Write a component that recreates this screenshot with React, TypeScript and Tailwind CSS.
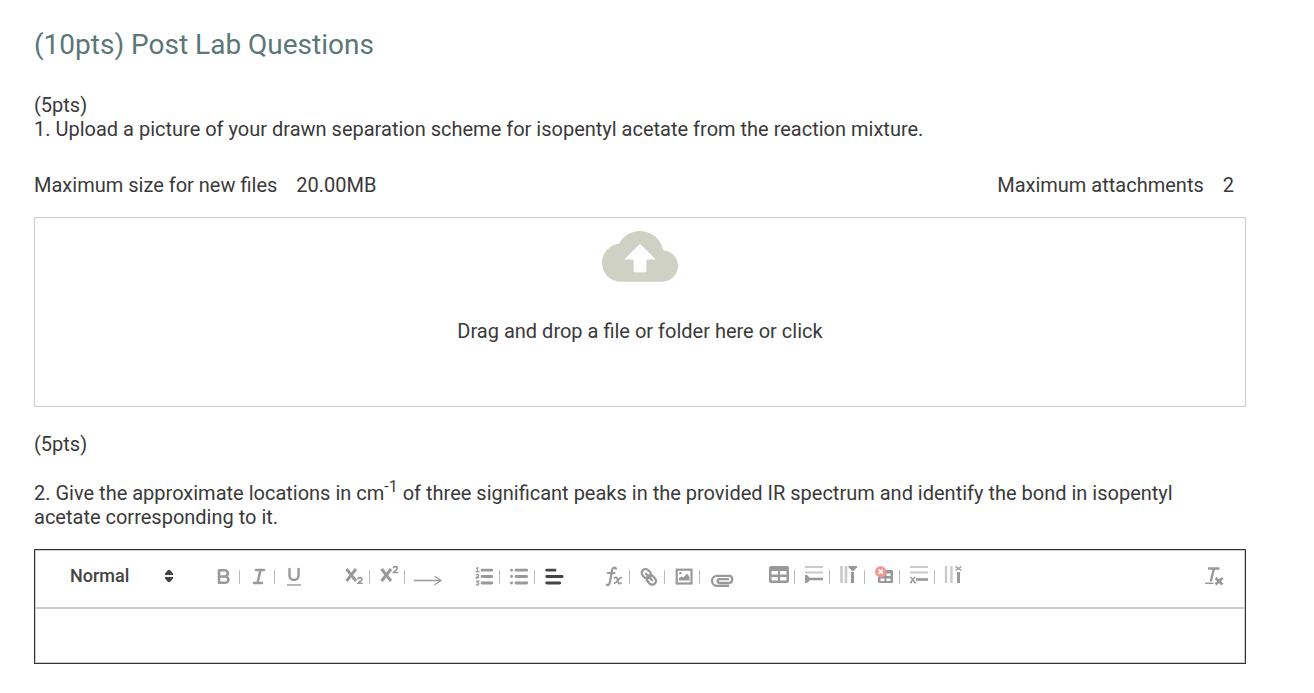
import { Fragment, type ReactNode } from "react";

type Tool = { label: string; icon: ReactNode };

const Glyph = ({ children }: { children: ReactNode }) => (
  <svg viewBox="0 0 35 40" className="h-10 w-[35px] shrink-0 overflow-visible" fill="none" stroke="#999" aria-hidden="true">
    {children}
  </svg>
);

const gridCells = (
  <path
    fill="#999"
    stroke="none"
    fillRule="evenodd"
    d="M11 8h16q2 0 2 2v13q0 2-2 2H11q-2 0-2-2V10q0-2 2-2zM11.500 13v3.500h6.500V13zM20 13v3.500h6.500V13zM11.500 19v3.500h6.500V19zM20 19v3.500h6.500V19z"
  />
);

const groups: Tool[][] = [
  [
    { label: "Bold", icon: <path strokeWidth="2.600" strokeLinejoin="round" d="M14 12.200h5.700a3 3 0 0 1 0 6.300h-5.700zM14 18.500h6.200a3.100 3.100 0 0 1 0 6.300h-6.200z" /> },
    { label: "Italic", icon: <path strokeWidth="2.500" strokeLinecap="round" d="M16 12h8M14 25h8M20.500 12l-3 13" /> },
    { label: "Underline", icon: <><path strokeWidth="2.400" strokeLinecap="round" d="M14.500 11v6.500a4.500 4.500 0 0 0 9 0V11" /><path strokeWidth="1.400" d="M12 27h14" /></> },
  ],
  [
    { label: "Subscript", icon: <><path strokeWidth="3" d="M11.500 11l9.500 12M21 11l-9.500 12" /><path strokeWidth="1.600" d="M23 21.300c0-2.200 4-2.200 4 0 0 1.200-2.500 2-4 4h4.800" /></> },
    { label: "Superscript", icon: <><path strokeWidth="3" d="M11.500 11l9.500 12M21 11l-9.500 12" /><path strokeWidth="1.600" d="M23.500 10.300c0-2.200 4-2.200 4 0 0 1.200-2.500 2-4 4.200h4.800" /></> },
    { label: "Reaction arrow", icon: <path strokeWidth="1.300" d="M9 22.500h27M29.500 18.200l6.500 4.300-6.500 4.300" /> },
  ],
  [
    {
      label: "Numbered list",
      icon: (
        <>
          <path strokeWidth="2.800" strokeLinecap="round" d="M17 12.200h9.800M17 18.500h9.800M17 25h9.800" />
          <path strokeWidth="1.200" d="M11 10.500l1.500-.8v4M10.500 13.700h4M11 17.200c.8-1.300 3-.9 2.700.3-.2.800-1.700 1.300-2.700 2.300h3.200M11 23.200h2.700l-1.300 1.500c2 0 1.900 2.400 0 2.400q-1 0-1.600-.6" />
        </>
      ),
    },
    { label: "Bulleted list", icon: <path strokeWidth="2.800" strokeLinecap="round" d="M11.500 12.200h.1M11.500 18.500h.1M11.500 25h.1M16 12.200h10.700M16 18.500h10.700M16 25h10.700" /> },
    { label: "Alignment", icon: <path stroke="#444" strokeWidth="2.800" strokeLinecap="round" d="M11.700 12.200h8.300M11.700 18.500h15.500M11.700 25h13" /> },
  ],
  [
    {
      label: "Formula",
      icon: (
        <>
          <path strokeWidth="2.200" strokeLinecap="round" d="M21 10.500c-1.500-1.800-3.500-.8-4 1.700l-2 11.500c-.4 2.800-1.800 4-3.200 3M12.800 15h6.700" />
          <path strokeWidth="1.800" strokeLinecap="round" d="M19.500 20c1.500-1.300 2.300-.7 2.800 1l.7 3c.6 1.800 1.600 2 3 .9M26.300 19.600c-2.400-.2-4.200 5.800-6.800 5.600" />
        </>
      ),
    },
    {
      label: "Link",
      icon: (
        <g transform="rotate(48 19 19)" strokeWidth="2.300">
          <rect x="9.800" y="15" width="10" height="7.600" rx="3.800" />
          <rect x="17.700" y="15.400" width="10" height="7.600" rx="3.800" />
          <path d="M14.500 19h9" strokeWidth="2.200" strokeLinecap="round" />
        </g>
      ),
    },
    {
      label: "Image",
      icon: (
        <>
          <rect x="11.700" y="11.700" width="14.800" height="13.800" strokeWidth="2.200" />
          <path fill="#999" stroke="none" d="M14 22.500v-2.500l3-1.500 1.500 1 3.500-4 2.500 3.500v3.500zM14.300 14h2.200v2.200h-2.200z" />
        </>
      ),
    },
    { label: "Attachment", icon: <path strokeWidth="2.300" d="M29 27.800H17a5 5 0 0 1 0-10H30a4 4 0 0 1 0 7.200H19.500a1.900 1.900 0 0 1 0-3.800H29" /> },
  ],
  [
    { label: "Insert table", icon: gridCells },
    {
      label: "Insert row",
      icon: (
        <>
          <path stroke="#c9c9c9" strokeWidth="2.200" d="M10 9h18M10 14.500h18" />
          <path strokeWidth="2.600" d="M15 21h13" />
          <path fill="#999" stroke="none" d="M10 17h2l4 4-4 4h-2z" />
        </>
      ),
    },
    {
      label: "Insert column",
      icon: (
        <>
          <path stroke="#c9c9c9" strokeWidth="2.600" d="M11.500 8v17M16 8v17" />
          <path strokeWidth="3" d="M22.500 14v11" />
          <path fill="#999" stroke="none" d="M18.500 8h8.500v1.500l-4.200 4-4.300-4z" />
        </>
      ),
    },
    {
      label: "Delete table",
      icon: (
        <>
          <path fill="#999" stroke="none" fillRule="evenodd" d="M13 12h14q1 0 1 1v11q0 1-1 1H14q-1 0-1-1zM15.500 15.500V18h4v-2.500zM21.500 15.500V18h4v-2.500zM15.500 20.500V23h4v-2.500zM21.500 20.500V23h4v-2.500z" />
          <circle cx="15.700" cy="13.700" r="5.700" fill="#ed9a95" stroke="none" />
          <path stroke="#fff" strokeWidth="1.700" d="M13.700 11.700l4 4M17.700 11.700l-4 4" />
        </>
      ),
    },
    {
      label: "Delete row",
      icon: (
        <>
          <path stroke="#c9c9c9" strokeWidth="2.200" d="M10 9h18M10 14.500h18" />
          <path strokeWidth="2.600" d="M16 21.500h12" />
          <path strokeWidth="1.300" d="M10.500 19l4.500 5.500M15 19l-4.500 5.500M10 24.500h2M14 24.500h2" />
        </>
      ),
    },
    {
      label: "Delete column",
      icon: (
        <>
          <path stroke="#c9c9c9" strokeWidth="2.300" d="M11 8v17M16.500 8v17" />
          <path strokeWidth="3" d="M23.500 14v11" />
          <path strokeWidth="1.300" d="M20.500 8.500l6 4M26.500 8.500l-6 4" />
        </>
      ),
    },
  ],
];

function ToolButton({ label, icon }: Tool) {
  return (
    <button type="button" aria-label={label} className="flex h-10 w-[34px] cursor-pointer">
      <Glyph>{icon}</Glyph>
    </button>
  );
}

function Editor() {
  return (
    <section className="mt-5 border border-[#333]">
      <div className="border border-[#ccc]">
        <div className="flex items-start border-b-2 border-[#ccc] pt-[7px] pr-[13px] pb-[9px] pl-[34px]">
          <label className="mr-[25px] flex h-10 w-[110px] items-start pt-1.5">
            <select aria-label="Text style" defaultValue="Normal" className="h-6 w-[90px] appearance-none bg-transparent text-lg leading-6 font-medium text-[#444] outline-none">
              <option>Normal</option>
              <option>Heading 1</option>
              <option>Heading 2</option>
            </select>
            <svg viewBox="0 0 10 14" className="mt-[5px] ml-1 h-3.5 w-2.5" fill="#444" aria-hidden="true">
              <path d="M1 6V4.500L4 1h2l3 3.500V6zM1 8v1.500L4 13h2l3-3.500V8z" />
            </svg>
          </label>
          <div className="flex gap-[25px]">
            {groups.map((group, g) => (
              <div key={g} className="flex items-center">
                {group.map((tool, i) => (
                  <Fragment key={tool.label}>
                    <ToolButton {...tool} />
                    <span className={i < group.length - 1 ? "mt-[-2px] h-3.5 w-px bg-[#bbb]" : "w-px"} />
                  </Fragment>
                ))}
              </div>
            ))}
          </div>
          <button type="button" aria-label="Clear formatting" className="ml-auto flex h-10 w-[35px] cursor-pointer">
            <Glyph>
              <path strokeWidth="2.400" strokeLinecap="round" d="M13 10.500h9.500M18 10.500l-3 12" />
              <path strokeWidth="1.500" d="M9 25.300h8.500" />
              <path strokeWidth="2.700" d="M19.500 20l7 6.500M26.500 20l-7 6.500" />
            </Glyph>
          </button>
        </div>
        <div role="textbox" aria-label="Answer" contentEditable suppressContentEditableWarning className="h-[53px] outline-none" />
      </div>
    </section>
  );
}

export default function App() {
  return (
    <main className="bg-white pt-[25px] pr-[68px] pb-7 pl-[34px] font-['Roboto',sans-serif] text-xl leading-6 text-[#3a3a3a]">
      <h1 className="text-[28px] leading-10 text-[#5b7778]">(10pts) Post Lab Questions</h1>
      <div className="mt-7">
        <p>(5pts)</p>
        <p>1. Upload a picture of your drawn separation scheme for isopentyl acetate from the reaction mixture.</p>
      </div>
      <div className="mt-8 flex justify-between">
        <p className="flex gap-[19px]">
          <span>Maximum size for new files</span>
          <span>20.00MB</span>
        </p>
        <p className="flex gap-[19px] pr-3">
          <span>Maximum attachments</span>
          <span>2</span>
        </p>
      </div>
      <button type="button" className="mt-5 flex h-[190px] w-full cursor-pointer flex-col items-center border border-[#cfd1c5]">
        <svg viewBox="0 0 76 51" className="mt-[13px] h-[51px] w-[76px]" fill="#cfd1c5" aria-hidden="true">
          <path fillRule="evenodd" d="M61.300 19.300C59.100 8.300 49.500 0 38 0 28.900 0 21 5.200 17 12.700 7.500 13.700 0 21.900 0 31.700 0 42.200 8.500 50.700 19 50.700h41.200c8.700 0 15.800-7.100 15.800-15.900 0-8.300-6.500-15.100-14.700-15.500zM44.300 28.500V41.200H31.700V28.500H22.200L38 12.700l15.800 15.800z" />
        </svg>
        <span className="mt-[37px]">Drag and drop a file or folder here or click</span>
      </button>
      <p className="mt-[25px]">(5pts)</p>
      <p className="mt-[25px] pr-3">
        2. Give the approximate locations in cm<sup className="text-[16px] leading-0">-1</sup> of three significant peaks in the provided IR spectrum and identify the bond in isopentyl acetate corresponding to it.
      </p>
      <Editor />
    </main>
  );
}
